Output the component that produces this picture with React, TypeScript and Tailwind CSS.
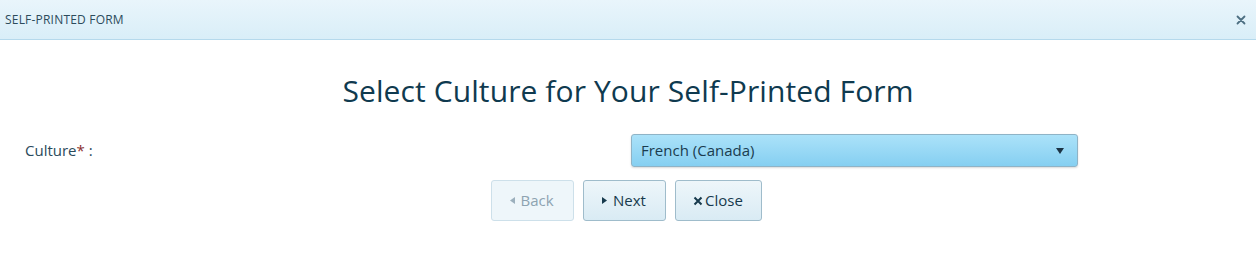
const App = () => {
  return (
    <div className="w-[1256px] h-[274px] bg-white font-['Open_Sans',sans-serif] text-[#1d3f52]">
      <div className="h-[40px] flex items-center justify-between pl-[5px] pr-[10px] bg-gradient-to-b from-[#e9f5fb] to-[#d9eef8] border-b border-[#b5d9ec]">
        <span className="text-[12px] text-[#2c4b5c] tracking-[0.2px]">SELF-PRINTED FORM</span>
        <svg width="10" height="10" viewBox="0 0 10 10" className="text-[#4d6f82]">
          <path d="M1.5 1.5 L8.5 8.5 M8.5 1.5 L1.5 8.5" stroke="currentColor" strokeWidth="1.8" strokeLinecap="round" />
        </svg>
      </div>

      <div className="pt-[32px]">
        <h1 className="text-center text-[30px] leading-[38px] text-[#0f3a4f] tracking-[0.1px]">
          Select Culture for Your Self-Printed Form
        </h1>

        <div className="mt-[24px] flex items-center">
          <div className="w-[631px] pl-[25px] text-[15px] text-[#2b4a5b]">
            Culture<span className="text-[#8b2e2e]">*</span> :
          </div>
          <div className="w-[447px] h-[33px] rounded-[3px] border border-[#8fb3c6] bg-gradient-to-b from-[#abe2f9] to-[#85cff1] shadow-[0_1px_2px_rgba(0,0,0,0.15)] flex items-center justify-between pl-[9px] pr-[13px]">
            <span className="text-[15px] text-[#1a3c4f]">French (Canada)</span>
            <svg width="8" height="6" viewBox="0 0 8 6">
              <path d="M0 0 H8 L4 6 Z" fill="#1b3344" />
            </svg>
          </div>
        </div>

        <div className="mt-[13px] flex justify-center gap-[9px] pr-[4px]">
          <button className="w-[83px] h-[41px] rounded-[3px] border border-[#cde0ea] bg-[#eef6fa] text-[15px] text-[#8da3b1] flex items-center justify-center gap-[5px]">
            <svg width="5" height="7" viewBox="0 0 5 7"><path d="M5 0 V7 L0 3.5 Z" fill="#9cb0bd" /></svg>
            Back
          </button>
          <button className="w-[83px] h-[41px] rounded-[3px] border border-[#9fbccb] bg-gradient-to-b from-[#eef6fa] to-[#d9ebf4] text-[15px] text-[#173a4d] flex items-center justify-center gap-[6px]">
            <svg width="5" height="7" viewBox="0 0 5 7"><path d="M0 0 V7 L5 3.5 Z" fill="#173a4d" /></svg>
            Next
          </button>
          <button className="w-[87px] h-[41px] rounded-[3px] border border-[#9fbccb] bg-gradient-to-b from-[#eef6fa] to-[#d9ebf4] text-[15px] text-[#173a4d] flex items-center justify-center gap-[2px]">
            <svg width="10" height="10" viewBox="0 0 10 10">
              <path d="M1.5 1.5 L8.5 8.5 M8.5 1.5 L1.5 8.5" stroke="#173a4d" strokeWidth="2" />
            </svg>
            Close
          </button>
        </div>
      </div>
    </div>
  );
};

export default App;
